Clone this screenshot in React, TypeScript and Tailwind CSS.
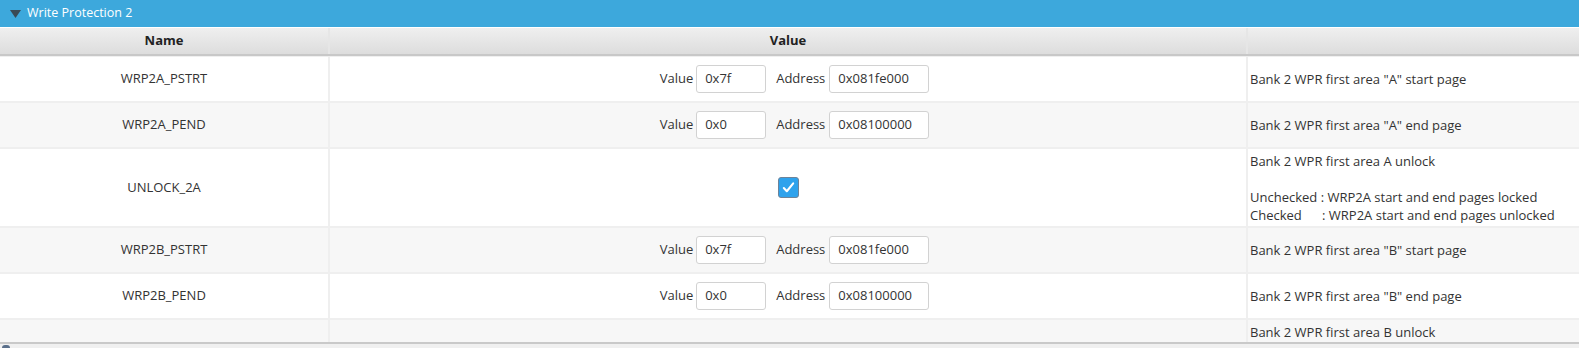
import React from 'react';

type Row =
  | { name: string; kind: 'addr'; value: string; address: string; desc: string }
  | { name: string; kind: 'check'; checked: boolean; desc: string };

const ROWS: Row[] = [
  { name: 'WRP2A_PSTRT', kind: 'addr', value: '0x7f', address: '0x081fe000', desc: 'Bank 2 WPR first area "A" start page' },
  { name: 'WRP2A_PEND', kind: 'addr', value: '0x0', address: '0x08100000', desc: 'Bank 2 WPR first area "A" end page' },
  {
    name: 'UNLOCK_2A',
    kind: 'check',
    checked: true,
    desc: 'Bank 2 WPR first area A unlock\n\nUnchecked : WRP2A start and end pages locked\nChecked      : WRP2A start and end pages unlocked',
  },
  { name: 'WRP2B_PSTRT', kind: 'addr', value: '0x7f', address: '0x081fe000', desc: 'Bank 2 WPR first area "B" start page' },
  { name: 'WRP2B_PEND', kind: 'addr', value: '0x0', address: '0x08100000', desc: 'Bank 2 WPR first area "B" end page' },
  { name: '', kind: 'check', checked: true, desc: 'Bank 2 WPR first area B unlock' },
];

function Field({ value, width }: { value: string; width: string }) {
  return (
    <div
      className={`flex h-[28px] items-center rounded-[3px] border border-[#d2d2d2] bg-white px-[8px] text-[#333] ${width}`}
    >
      {value}
    </div>
  );
}

function CheckBox() {
  return (
    <div className="flex h-[21px] w-[21px] items-center justify-center rounded-[3px] border border-[#6d8399] bg-[#2ea2ec]">
      <svg width="15" height="15" viewBox="0 0 16 16" fill="none">
        <path d="M3 8.5l3.2 3.5L13 3.5" stroke="white" strokeWidth="2.2" strokeLinecap="round" strokeLinejoin="round" />
      </svg>
    </div>
  );
}

export default function App() {
  return (
    <div className="h-[348px] w-full overflow-hidden bg-[#f0f0f0] font-['Open_Sans',sans-serif] text-[13px] text-[#333]">
      {/* section title */}
      <div className="flex h-[27px] items-center gap-[6px] bg-[#3da8dc] pl-[10px] text-[12.5px] text-white">
        <svg width="11" height="8" viewBox="0 0 11 8">
          <path d="M0 0h11L5.5 8z" fill="#3a4a56" />
        </svg>
        <span>Write Protection 2</span>
      </div>
      <div className="h-px bg-white" />

      <div className="border-b-2 border-[#c9c9c9]">
        {/* table header */}
        <div className="grid h-[28px] grid-cols-[328px_916px_minmax(0,1fr)] gap-x-[2px] border-b-2 border-[#c8c8c8] bg-[#e6e6e6]">
          <div className="flex items-center justify-center bg-gradient-to-b from-[#efefef] to-[#dddddd] font-bold text-[#222]">
            Name
          </div>
          <div className="flex items-center justify-center bg-gradient-to-b from-[#efefef] to-[#dddddd] font-bold text-[#222]">
            Value
          </div>
          <div className="bg-gradient-to-b from-[#efefef] to-[#dddddd]" />
        </div>

        {/* rows */}
        <div className="grid h-[286px] grid-cols-[328px_916px_minmax(0,1fr)] content-start gap-[2px] overflow-hidden bg-[#efefef] pt-[1px]">
          {ROWS.map((r, i) => {
            const bg = i % 2 === 0 ? 'bg-white' : 'bg-[#f7f7f7]';
            const tall = r.kind === 'check';
            const h = tall ? 'h-[77px]' : 'h-[44px]';
            return (
              <React.Fragment key={i}>
                <div className={`flex items-center justify-center ${bg} ${h}`}>{r.name}</div>
                <div className={`flex items-center justify-center ${bg} ${h}`}>
                  {r.kind === 'addr' ? (
                    <div className="flex items-center pl-[13px]">
                      <span className="mr-[3px]">Value</span>
                      <Field value={r.value} width="w-[70px]" />
                      <span className="ml-[10px] mr-[4px]">Address</span>
                      <Field value={r.address} width="w-[100px]" />
                    </div>
                  ) : (
                    r.name && <CheckBox />
                  )}
                </div>
                <div
                  className={`flex min-w-0 overflow-hidden ${tall ? 'items-start pt-[3px]' : 'items-center'} ${bg} ${h} whitespace-pre pl-[2px] leading-[18px]`}
                >
                  {r.desc}
                </div>
              </React.Fragment>
            );
          })}
        </div>
      </div>

      <div className="flex h-[4px] items-end pl-[2px]">
        <div className="h-[3px] w-[8px] rounded-t-full bg-[#5a6f8a]" />
      </div>
    </div>
  );
}
